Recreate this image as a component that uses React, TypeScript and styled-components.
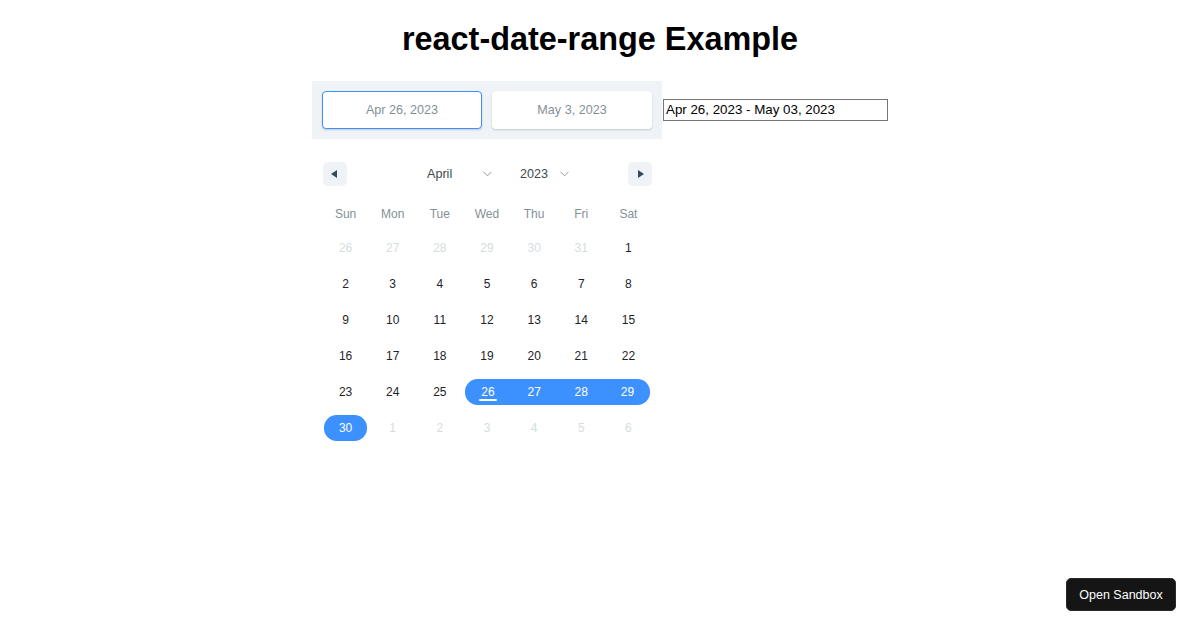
import React from 'react';
import styled, { createGlobalStyle } from 'styled-components';

const COLOR = {
  Accent: '#3d91ff',
  Panel: '#eff2f7',
  Text: '#1d2429',
  Muted: '#849095',
  Passive: '#d5dce0',
  Picker: '#3e484f',
  Arrow: '#34495e',
};

const GlobalStyle = createGlobalStyle`
  body {
    margin: 0;
    background: #fff;
    font-family: "Liberation Sans", Arial, sans-serif;
  }
`;

const Page = styled.div`
  display: flex;
  flex-direction: column;
  align-items: center;
`;

const Title = styled.h1`
  margin: 21px 0 22px;
  font-size: 32.4px;
  line-height: 37px;
  font-weight: 700;
  color: #000;
`;

const Row = styled.div`
  display: flex;
  align-items: baseline;
  padding-top: 1px;
`;

const Calendar = styled.div`
  width: 350px;
  display: flex;
  flex-direction: column;
  font-size: 12px;
  color: ${COLOR.Text};
`;

const DateDisplay = styled.div`
  display: flex;
  gap: 10px;
  padding: 10px;
  background: ${COLOR.Panel};
`;

const DateItem = styled.span<{ $active?: boolean }>`
  flex: 1;
  height: 36px;
  display: flex;
  align-items: center;
  justify-content: center;
  background: #fff;
  border-radius: 4px;
  border: 1px solid ${(p) => (p.$active ? COLOR.Accent : 'transparent')};
  box-shadow: 0 1px 2px 0 rgba(35, 57, 66, 0.21);
  color: ${COLOR.Muted};
  font-size: 12.6px;
`;

const Header = styled.div`
  height: 59px;
  padding-top: 10px;
  box-sizing: border-box;
  display: flex;
  align-items: center;
  justify-content: space-between;
`;

const NavButton = styled.button`
  width: 24px;
  height: 24px;
  margin: 0 10px 0 11px;
  padding: 0;
  border: 0;
  border-radius: 5px;
  background: ${COLOR.Panel};
  display: flex;
  align-items: center;
  justify-content: center;
`;

const Triangle = styled.i<{ $dir: 'left' | 'right' }>`
  display: block;
  width: 0;
  height: 0;
  border-style: solid;
  border-width: 4px 0 4px 6px;
  border-color: transparent transparent transparent ${COLOR.Arrow};
  transform: ${(p) => (p.$dir === 'left' ? 'rotate(180deg) translateX(1px)' : 'translateX(1px)')};
`;

const Pickers = styled.div`
  flex: 1;
  display: flex;
  justify-content: center;
  gap: 10px;
  padding-left: 20px;
`;

const Picker = styled.span<{ $width: number }>`
  width: ${(p) => p.$width}px;
  box-sizing: border-box;
  padding: 0 8px 0 10px;
  display: flex;
  align-items: center;
  justify-content: space-between;
  color: ${COLOR.Picker};
  font-size: 12.6px;
`;

const WeekDays = styled.div`
  display: grid;
  grid-template-columns: repeat(7, 1fr);
  padding: 0 10px;
`;

const WeekDay = styled.span`
  line-height: 32px;
  text-align: center;
  color: ${COLOR.Muted};
`;

const Days = styled.div`
  display: grid;
  grid-template-columns: repeat(7, 1fr);
  padding: 0 10px;
`;

const DayCell = styled.div`
  height: 36px;
  padding: 5px 0;
  box-sizing: border-box;
`;

type Edge = 'none' | 'start' | 'mid' | 'end' | 'single';

const Band = styled.div<{ $edge: Edge }>`
  height: 26px;
  display: flex;
  align-items: center;
  justify-content: center;
  background: ${(p) => (p.$edge === 'none' ? 'transparent' : COLOR.Accent)};
  margin-left: ${(p) => (p.$edge === 'start' || p.$edge === 'single' ? '2px' : '0')};
  margin-right: ${(p) => (p.$edge === 'end' || p.$edge === 'single' ? '2px' : '0')};
  border-radius: ${(p) =>
    p.$edge === 'start'
      ? '12.5px 0 0 12.5px'
      : p.$edge === 'end'
      ? '0 12.5px 12.5px 0'
      : p.$edge === 'single'
      ? '12.5px'
      : '0'};
`;

const DayNumber = styled.span<{ $passive?: boolean; $selected?: boolean; $today?: boolean }>`
  position: relative;
  color: ${(p) => (p.$selected ? '#fff' : p.$passive ? COLOR.Passive : COLOR.Text)};

  &::after {
    content: '';
    display: ${(p) => (p.$today ? 'block' : 'none')};
    position: absolute;
    left: 50%;
    bottom: -2px;
    width: 18px;
    height: 2px;
    margin-left: -9px;
    border-radius: 2px;
    background: ${(p) => (p.$selected ? '#fff' : COLOR.Accent)};
  }
`;

const RangeInput = styled.input`
  margin-left: 1px;
  width: 225px;
  height: 22px;
  box-sizing: border-box;
  padding: 1px 2px;
  border: 1px solid #767676;
  border-radius: 0;
  font-family: "Liberation Sans", Arial, sans-serif;
  font-size: 13.33px;
  color: #000;
`;

const SandboxButton = styled.button`
  position: fixed;
  right: 24px;
  bottom: 19px;
  width: 110px;
  height: 33px;
  border: 1px solid #2a2a2a;
  border-radius: 5px;
  background: #151515;
  color: #fff;
  font-family: "Liberation Sans", Arial, sans-serif;
  font-size: 12.5px;
`;

function Chevron() {
  return (
    <svg width="9" height="6" viewBox="0 0 9 6" fill="none">
      <path d="M0.5 0.8 L4.5 4.8 L8.5 0.8" stroke="#8d9aa0" strokeWidth="1" />
    </svg>
  );
}

const weekDays = ['Sun', 'Mon', 'Tue', 'Wed', 'Thu', 'Fri', 'Sat'];

type Day = { n: number; passive?: boolean; edge: Edge; today?: boolean };

function buildDays(): Day[] {
  const days: Day[] = [];
  for (let n = 26; n <= 31; n++) days.push({ n, passive: true, edge: 'none' });
  for (let n = 1; n <= 30; n++) {
    let edge: Edge = 'none';
    if (n === 26) edge = 'start';
    else if (n === 27 || n === 28) edge = 'mid';
    else if (n === 29) edge = 'end';
    else if (n === 30) edge = 'single';
    days.push({ n, edge, today: n === 26 });
  }
  for (let n = 1; n <= 6; n++) days.push({ n, passive: true, edge: 'none' });
  return days;
}

function App() {
  const days = buildDays();
  return (
    <Page>
      <GlobalStyle />
      <Title>react-date-range Example</Title>
      <Row>
        <Calendar>
          <DateDisplay>
            <DateItem $active>Apr 26, 2023</DateItem>
            <DateItem>May 3, 2023</DateItem>
          </DateDisplay>
          <Header>
            <NavButton>
              <Triangle $dir="left" />
            </NavButton>
            <Pickers>
              <Picker $width={83}>
                April
                <Chevron />
              </Picker>
              <Picker $width={67}>
                2023
                <Chevron />
              </Picker>
            </Pickers>
            <NavButton>
              <Triangle $dir="right" />
            </NavButton>
          </Header>
          <WeekDays>
            {weekDays.map((d) => (
              <WeekDay key={d}>{d}</WeekDay>
            ))}
          </WeekDays>
          <Days>
            {days.map((d, i) => (
              <DayCell key={i}>
                <Band $edge={d.edge}>
                  <DayNumber
                    $passive={d.passive}
                    $selected={d.edge !== 'none'}
                    $today={d.today}
                  >
                    {d.n}
                  </DayNumber>
                </Band>
              </DayCell>
            ))}
          </Days>
        </Calendar>
        <RangeInput readOnly value="Apr 26, 2023 - May 03, 2023" />
      </Row>
      <SandboxButton>Open Sandbox</SandboxButton>
    </Page>
  );
}

export default App;
